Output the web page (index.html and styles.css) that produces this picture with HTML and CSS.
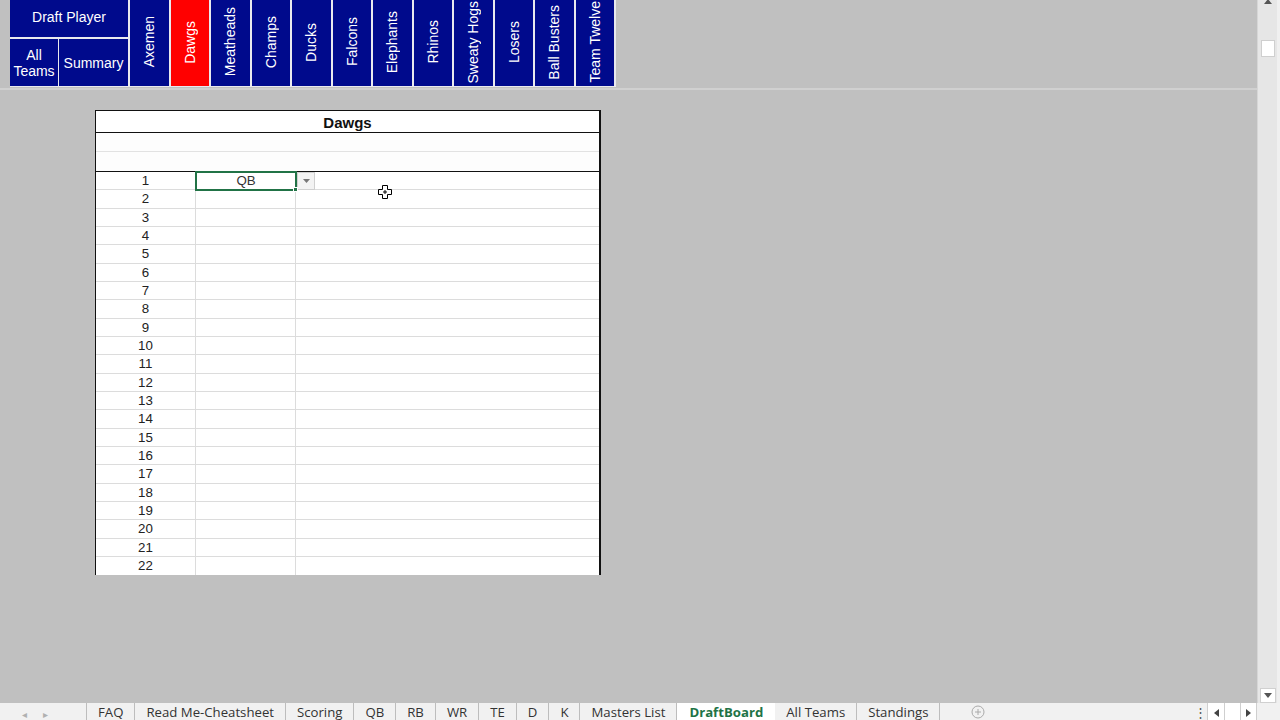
FILE: index.html
```html
<!DOCTYPE html>
<html>
<head>
<meta charset="utf-8">
<link rel="stylesheet" href="styles.css">
</head>
<body>
<div class="app">
  <div class="main">
    <div class="sheet">
      <div class="nav">
        <div class="nav-left">
          <div class="cell draft">Draft Player</div>
          <div class="nav-left-row">
            <div class="cell allteams">All<br>Teams</div>
            <div class="cell summary">Summary</div>
          </div>
        </div>
        <div class="cell tab"><span>Axemen</span></div>
        <div class="cell tab active"><span>Dawgs</span></div>
        <div class="cell tab"><span>Meatheads</span></div>
        <div class="cell tab"><span>Champs</span></div>
        <div class="cell tab"><span>Ducks</span></div>
        <div class="cell tab"><span>Falcons</span></div>
        <div class="cell tab"><span>Elephants</span></div>
        <div class="cell tab"><span>Rhinos</span></div>
        <div class="cell tab"><span>Sweaty Hogs</span></div>
        <div class="cell tab"><span>Losers</span></div>
        <div class="cell tab"><span>Ball Busters</span></div>
        <div class="cell tab"><span>Team Twelve</span></div>
      </div>
      <div class="rowline"></div>

      <div class="board">
        <div class="title">Dawgs</div>
        <div class="blank"></div>
        <div class="blank last"></div>
        <div class="rows">
          <div class="row first"><div class="c1">1</div><div class="c2 sel">QB<span class="handle"></span></div><div class="c3"><span class="dd"><svg width="7" height="4" viewBox="0 0 7 4"><path d="M0 0H7L3.5 4Z" fill="#777"/></svg></span></div></div>
          <div class="row"><div class="c1">2</div><div class="c2"></div><div class="c3"></div></div>
          <div class="row"><div class="c1">3</div><div class="c2"></div><div class="c3"></div></div>
          <div class="row"><div class="c1">4</div><div class="c2"></div><div class="c3"></div></div>
          <div class="row"><div class="c1">5</div><div class="c2"></div><div class="c3"></div></div>
          <div class="row"><div class="c1">6</div><div class="c2"></div><div class="c3"></div></div>
          <div class="row"><div class="c1">7</div><div class="c2"></div><div class="c3"></div></div>
          <div class="row"><div class="c1">8</div><div class="c2"></div><div class="c3"></div></div>
          <div class="row"><div class="c1">9</div><div class="c2"></div><div class="c3"></div></div>
          <div class="row"><div class="c1">10</div><div class="c2"></div><div class="c3"></div></div>
          <div class="row"><div class="c1">11</div><div class="c2"></div><div class="c3"></div></div>
          <div class="row"><div class="c1">12</div><div class="c2"></div><div class="c3"></div></div>
          <div class="row"><div class="c1">13</div><div class="c2"></div><div class="c3"></div></div>
          <div class="row"><div class="c1">14</div><div class="c2"></div><div class="c3"></div></div>
          <div class="row"><div class="c1">15</div><div class="c2"></div><div class="c3"></div></div>
          <div class="row"><div class="c1">16</div><div class="c2"></div><div class="c3"></div></div>
          <div class="row"><div class="c1">17</div><div class="c2"></div><div class="c3"></div></div>
          <div class="row"><div class="c1">18</div><div class="c2"></div><div class="c3"></div></div>
          <div class="row"><div class="c1">19</div><div class="c2"></div><div class="c3"></div></div>
          <div class="row"><div class="c1">20</div><div class="c2"></div><div class="c3"></div></div>
          <div class="row"><div class="c1">21</div><div class="c2"></div><div class="c3"></div></div>
          <div class="row lastrow"><div class="c1">22</div><div class="c2"></div><div class="c3"></div></div>
        </div>
      </div>

      <svg class="cursor" width="14" height="14" viewBox="0 0 14 14">
        <path d="M4.5 0.5H9.5V4.5H13.5V9.5H9.5V13.5H4.5V9.5H0.5V4.5H4.5Z" fill="#fff" stroke="#000" stroke-width="1"/>
        <path d="M7 5V9M5 7H9" stroke="#000" stroke-width="1"/>
      </svg>
    </div>
    <div class="vscroll">
      <div class="vup"><svg width="8" height="5" viewBox="0 0 8 5"><path d="M0 5H8L4 0Z" fill="#555"/></svg></div>
      <div class="vthumb"></div>
      <div class="vspace"></div>
      <div class="vdown"><svg width="8" height="5" viewBox="0 0 8 5"><path d="M0 0H8L4 5Z" fill="#555"/></svg></div>
    </div>
  </div>
  <div class="tabbar">
    <div class="navarrows"><span>&#9666;</span><span>&#9656;</span></div>
    <div class="sheettabs">
      <div class="stab">FAQ</div>
      <div class="stab">Read Me-Cheatsheet</div>
      <div class="stab">Scoring</div>
      <div class="stab">QB</div>
      <div class="stab">RB</div>
      <div class="stab">WR</div>
      <div class="stab">TE</div>
      <div class="stab">D</div>
      <div class="stab">K</div>
      <div class="stab">Masters List</div>
      <div class="stab current">DraftBoard</div>
      <div class="stab noline">All Teams</div>
      <div class="stab">Standings</div>
      <div class="stab addtab"><svg width="14" height="14" viewBox="0 0 14 14"><circle cx="7" cy="7" r="6" fill="none" stroke="#aaa" stroke-width="1"/><path d="M7 4V10M4 7H10" stroke="#aaa" stroke-width="1"/></svg></div>
    </div>
    <div class="dots">&#8942;</div>
    <div class="hbtns">
      <div class="hbtn"><svg width="5" height="8" viewBox="0 0 5 8"><path d="M5 0V8L0 4Z" fill="#444"/></svg></div>
      <div class="hbtn"></div>
      <div class="hbtn"><svg width="5" height="8" viewBox="0 0 5 8"><path d="M0 0V8L5 4Z" fill="#444"/></svg></div>
    </div>
  </div>
</div>
</body>
</html>
```

FILE: styles.css
```css
* { box-sizing: border-box; }
html, body { margin: 0; padding: 0; }
body {
  width: 1280px;
  height: 720px;
  overflow: hidden;
  font-family: "Liberation Sans", Arial, sans-serif;
  background: #c0c0c0;
}
.app {
  display: flex;
  flex-direction: column;
  height: 720px;
}
.main {
  display: flex;
  height: 703px;
}
.sheet {
  position: relative;
  flex: 1;
  background: #c0c0c0;
  overflow: hidden;
}
.nav {
  display: flex;
  gap: 2px;
  margin-left: 10px;
  height: 87px;
  width: 606px;
  background: #e9e9ee;
  padding-bottom: 1px;
}
.cell {
  background: #000a8c;
  color: #fff;
  font-size: 14px;
  display: flex;
  align-items: center;
  justify-content: center;
  text-align: center;
  overflow: visible;
}
.nav-left {
  display: flex;
  flex-direction: column;
  gap: 2px;
  width: 118px;
}
.draft { height: 37px; padding-bottom: 4px; }
.nav-left-row {
  display: flex;
  gap: 1px;
  flex: 1;
}
.allteams { width: 48px; line-height: 16px; padding-top: 1px; }
.summary { flex: 1; padding-top: 1px; }
.tab {
  flex: 0 0 38.5px;
  position: relative;
}
.tab span {
  writing-mode: vertical-rl;
  transform: rotate(180deg);
  white-space: nowrap;
  line-height: 16px;
  margin-top: -2px;
}
.tab.active { background: #ff0000; }
.rowline {
  height: 2px;
  margin-top: 1px;
  background: #d0d0d0;
}
.board {
  margin-left: 95px;
  margin-top: 20px;
  width: 506px;
  background: #fff;
  border-left: 1px solid #111;
  border-right: 2px solid #111;
  border-top: 1px solid #111;
}
.title {
  height: 22px;
  border-bottom: 1px solid #111;
  font-weight: bold;
  font-size: 15px;
  text-align: center;
  line-height: 21px;
  padding-top: 1px;
  color: #111;
}
.blank {
  height: 19px;
  border-bottom: 1px solid #e2e2e2;
  background: #fdfdfd;
}
.blank.last {
  height: 20px;
  border-bottom: 1.5px solid #111;
}
.rows {
  display: flex;
  flex-direction: column;
}
.row {
  display: flex;
  height: 18.33px;
  border-bottom: 1px solid #dcdcdc;
  font-size: 13.3px;
  color: #222;
}
.row.lastrow { border-bottom: none; }
.c1 {
  width: 100px;
  text-align: center;
  line-height: 18px;
  border-right: 1px solid #dcdcdc;
}
.c2 {
  width: 100px;
  text-align: center;
  line-height: 18px;
  border-right: 1px solid #dcdcdc;
  position: relative;
}
.c3 {
  flex: 1;
  position: relative;
}
.sel {
  border: 2px solid #217346;
  margin: -1px 0 -2px -1px;
  width: 102px;
  line-height: 16px;
  color: #333;
  z-index: 1;
}
.handle {
  position: absolute;
  right: -3px;
  bottom: -3px;
  width: 5px;
  height: 5px;
  background: #217346;
  border: 1px solid #fff;
}
.dd {
  position: absolute;
  left: 0;
  top: 0;
  width: 18px;
  height: 18px;
  background: #f3f3f3;
  border: 1px solid #d0d0d0;
  display: flex;
  align-items: center;
  justify-content: center;
}
.cursor {
  position: absolute;
  left: 378px;
  top: 185px;
}
.vscroll {
  width: 23px;
  background: #e6e6e6;
  border-left: 1px solid #d6d6d6;
  border-right: 3px solid #f0f0f0;
  display: flex;
  flex-direction: column;
  align-items: center;
}
.vup {
  height: 9px;
  width: 16px;
  display: flex;
  align-items: flex-start;
  justify-content: center;
  margin-top: -1px;
}
.vthumb {
  margin-top: 32px;
  width: 14px;
  height: 17px;
  background: #fff;
  border: 1px solid #cfcfcf;
}
.vspace { flex: 1; }
.vdown {
  width: 16px;
  height: 15px;
  background: #fff;
  border: 1px solid #d0d0d0;
  display: flex;
  align-items: center;
  justify-content: center;
}
.tabbar {
  height: 17px;
  background: #f1f1f1;
  display: flex;
  align-items: stretch;
  font-family: "Open Sans", "Liberation Sans", sans-serif;
  font-size: 13.2px;
  color: #333;
  overflow: hidden;
}
.navarrows {
  width: 87px;
  display: flex;
  gap: 16px;
  padding-left: 22px;
  color: #b0b0b0;
  font-size: 10px;
  align-items: center;
  padding-top: 4px;
  border-right: 1px solid #bdbdbd;
}
.sheettabs {
  display: flex;
  align-items: stretch;
}
.stab {
  padding: 0 11px;
  line-height: 17px;
  padding-top: 1px;
  border-right: 1px solid #bdbdbd;
  white-space: nowrap;
}
.stab.current {
  background: #fff;
  color: #217346;
  font-weight: bold;
  padding: 1px 12px 0 12px;
  border-right: none;
}
.stab.addtab {
  border-right: none;
  padding: 2px 0 0 31px;
}
.dots {
  margin-left: auto;
  width: 14px;
  text-align: center;
  color: #555;
  font-size: 13px;
  line-height: 19px;
  margin-right: 0;
}
.hbtns {
  display: flex;
  margin-left: 0;
  margin-right: 23px;
  border-left: 1px solid #cfcfcf;
}
.hbtn {
  width: 16px;
  background: #fff;
  border-right: 1px solid #cfcfcf;
  display: flex;
  align-items: center;
  justify-content: center;
  padding-top: 2px;
}
.hbtn:first-child { width: 17px; }
```
